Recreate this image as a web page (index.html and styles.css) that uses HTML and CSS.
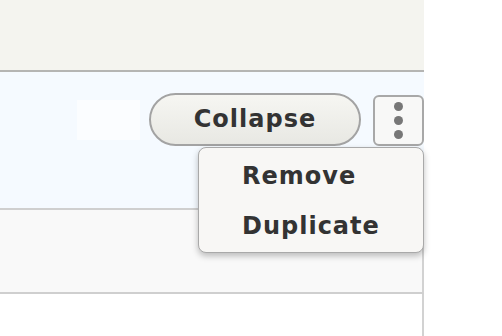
FILE: index.html
```html
<!DOCTYPE html>
<html lang="en">
<head>
    <meta charset="UTF-8">
    <meta name="viewport" content="width=device-width, initial-scale=1.0">
    <title>Paragraph actions</title>
    <link rel="stylesheet" href="styles.css">
</head>
<body>
    <div class="page">
        <div class="header"></div>
        <div class="row row-active">
            <div class="row-preview"></div>
            <div class="row-actions">
                <button class="collapse-button">Collapse</button>
                <div class="dropbutton">
                    <button class="dropbutton-toggle" aria-label="More actions">
                        <span class="dot"></span>
                        <span class="dot"></span>
                        <span class="dot"></span>
                    </button>
                    <ul class="dropbutton-menu">
                        <li>Remove</li>
                        <li>Duplicate</li>
                    </ul>
                </div>
            </div>
        </div>
        <div class="row row-plain"></div>
        <div class="rest"></div>
    </div>
</body>
</html>
```

FILE: styles.css
```css
body {
    margin: 0;
    padding: 0;
    background: #fff;
    font-family: "DejaVu Sans", "Liberation Sans", sans-serif;
    color: #333;
}

.page {
    width: 424px;
}

.header {
    height: 70px;
    background: #f4f4ef;
    border-bottom: 2px solid #b5b5b3;
}

.row {
    position: relative;
    border-bottom: 2px solid #cfcfcf;
}

.row-active {
    height: 136px;
    background: #f5faff;
    display: flex;
    align-items: flex-start;
    justify-content: space-between;
}

.row-preview {
    width: 63px;
    height: 40px;
    margin: 28px 0 0 77px;
    background: #fbfdff;
}

.row-actions {
    display: flex;
    align-items: flex-start;
    gap: 12px;
    margin-top: 21px;
}

.collapse-button {
    width: 212px;
    height: 53px;
    border: 2px solid #a3a3a3;
    border-radius: 27px;
    background: linear-gradient(#f6f6f2, #e8e8e3);
    font-family: inherit;
    font-size: 24px;
    font-weight: bold;
    letter-spacing: 1px;
    color: #333;
    padding: 0 0 2px;
}

.dropbutton {
    position: relative;
    margin-top: 2px;
}

.dropbutton-toggle {
    width: 51px;
    height: 51px;
    border: 2px solid #a8a8a8;
    border-radius: 6px;
    background: #f8f8f7;
    display: flex;
    flex-direction: column;
    align-items: center;
    justify-content: center;
    gap: 5px;
    padding: 0;
}

.dot {
    width: 9px;
    height: 9px;
    border-radius: 50%;
    background: #777;
}

.dropbutton-menu {
    position: absolute;
    top: 52px;
    right: 0;
    width: 224px;
    margin: 0;
    padding: 10px 0 8px;
    list-style: none;
    background: #f8f7f5;
    border: 1px solid #a9a9a9;
    border-radius: 8px;
    box-shadow: 0 3px 6px rgba(0, 0, 0, 0.25);
    z-index: 2;
}

.dropbutton-menu li {
    padding-left: 43px;
    line-height: 36px;
    font-size: 24px;
    font-weight: bold;
    letter-spacing: 1px;
    color: #333;
}

.dropbutton-menu li + li {
    margin-top: 14px;
}

.row-plain {
    height: 82px;
    background: #f9f9f9;
    border-right: 2px solid #d2d2d2;
}

.rest {
    height: 42px;
    border-right: 2px solid #d2d2d2;
}
```
